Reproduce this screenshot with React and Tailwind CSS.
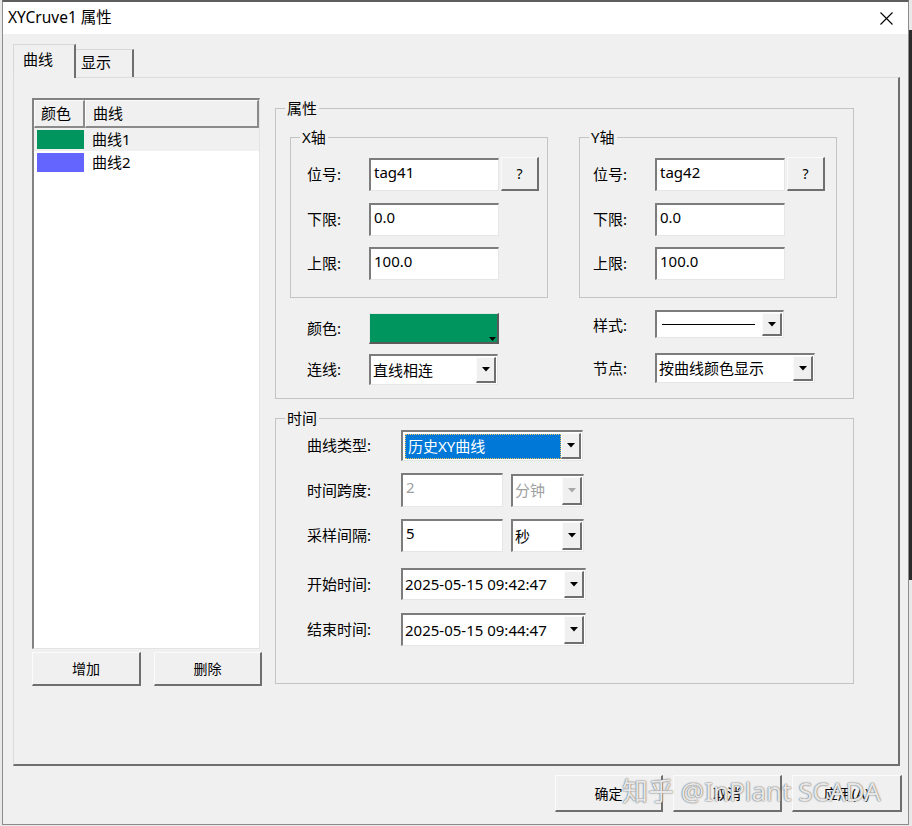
import React from 'react';

// Windows classic 3D edges
const SUNKEN =
  'bg-white border-t-2 border-l-2 border-t-[#7c7c7c] border-l-[#7c7c7c] border-r border-b border-r-[#e6e6e6] border-b-[#e6e6e6]';
const RAISED =
  'bg-[#f0f0f0] border-t border-l border-t-[#fbfbfb] border-l-[#fbfbfb] border-r-2 border-b-2 border-r-[#6f6f6f] border-b-[#6f6f6f]';

function Arrow({ disabled }) {
  return (
    <div className={`w-[20px] h-full flex items-center justify-center ${RAISED}`}>
      <svg width="8" height="5" viewBox="0 0 8 5">
        <path d="M0 0H8L4 4.5Z" fill={disabled ? '#a8a8a8' : '#000'} />
      </svg>
    </div>
  );
}

function Field({ value, w, h, disabled }) {
  return (
    <div
      className={`${SUNKEN} ${disabled ? 'bg-[#f0f0f0] text-[#a0a0a0]' : 'text-black'} pl-[3px] pt-[1px] leading-[22px]`}
      style={{ width: w, height: h }}
    >
      {value}
    </div>
  );
}

function Combo({ children, w, h, disabled }) {
  return (
    <div
      className={`${SUNKEN} ${disabled ? 'bg-[#f0f0f0] text-[#a0a0a0]' : 'text-black'} flex items-stretch`}
      style={{ width: w, height: h }}
    >
      <div className="flex-1 flex items-center pl-[2px] min-w-0">{children}</div>
      <div className="py-[1px] pr-[1px]">
        <Arrow disabled={disabled} />
      </div>
    </div>
  );
}

function QButton() {
  return (
    <div className={`${RAISED} ml-[2px] w-[38px] h-[34px] flex items-center justify-center text-[14px] border-t-[#c8c8c8] border-l-[#c8c8c8]`}>
      ?
    </div>
  );
}

function Group({ title, className, children }) {
  return (
    <div className={`border border-[#c4c4c4] flex flex-col ${className}`}>
      <span className="-mt-[11px] -mb-[9px] ml-[9px] px-[2px] w-fit bg-[#f0f0f0] leading-[20px] text-[15px]">
        {title}
      </span>
      {children}
    </div>
  );
}

function AxisBox({ name, tag, padL }) {
  return (
    <Group title={name} className="w-[258px] h-[161px]">
      <div className="flex flex-col mt-[19px]" style={{ paddingLeft: padL }}>
        <div className="flex items-center">
          <span className="w-[62px]">位号:</span>
          <Field value={tag} w={130} h={33} />
          <QButton />
        </div>
        <div className="flex items-center mt-[12px]">
          <span className="w-[62px]">下限:</span>
          <Field value="0.0" w={130} h={33} />
        </div>
        <div className="flex items-center mt-[11px]">
          <span className="w-[62px]">上限:</span>
          <Field value="100.0" w={130} h={33} />
        </div>
      </div>
    </Group>
  );
}

export default function App() {
  return (
    <div className="w-[912px] h-[826px] bg-[#e9e9e9] flex font-['Noto_Sans','Noto_Sans_CJK_SC',sans-serif] text-[15px] text-black">
      <div className="relative ml-[2px] w-[907px] h-[825px] bg-[#f0f0f0] border border-[#8c8c8c] border-t-2 border-t-[#5e5e5e] flex flex-col">
        {/* title bar */}
        <div className="h-[32px] bg-white flex items-center justify-between pl-[5px] pr-[14px]">
          <span className="text-[15.5px]">XYCruve1 属性</span>
          <svg width="13" height="13" viewBox="0 0 13 13" className="mr-[1px]">
            <path d="M0.5 0.5L12.5 12.5M12.5 0.5L0.5 12.5" stroke="#000" strokeWidth="1.1" />
          </svg>
        </div>

        {/* tabs */}
        <div className="flex items-end h-[43px] pl-[10px]">
          <div className="h-[34px] w-[63px] bg-[#f0f0f0] border-t border-l border-t-[#d8d8d8] border-l-[#d8d8d8] border-r-2 border-r-[#6f6f6f] pl-[9px] pt-[3px] relative top-[1px] z-10">
            曲线
          </div>
          <div className="h-[28px] w-[58px] bg-[#f0f0f0] border-t border-t-[#d8d8d8] border-r-2 border-r-[#6f6f6f] pl-[5px] pt-[1px]">
            显示
          </div>
        </div>

        {/* tab panel */}
        <div className="ml-[10px] w-[887px] h-[689px] border-t border-l border-t-[#dcdcdc] border-l-[#dcdcdc] border-r-2 border-b-2 border-r-[#6f6f6f] border-b-[#6f6f6f] flex">
          {/* left: list */}
          <div className="pl-[18px] pt-[20px] flex flex-col">
            <div className="w-[228px] h-[551px] bg-white border-t-2 border-l-2 border-t-[#828282] border-l-[#828282] border-r border-b border-r-[#e3e3e3] border-b-[#e3e3e3] flex flex-col">
              <div className="flex h-[28px]">
                <div className={`${RAISED} border-r-[#8a8a8a] border-b-[#8a8a8a] w-[51px] pl-[6px] leading-[24px]`}>颜色</div>
                <div className={`${RAISED} border-r-[#8a8a8a] border-b-[#8a8a8a] flex-1 pl-[7px] leading-[24px]`}>曲线</div>
              </div>
              <div className="flex items-center h-[23px] bg-[#f0f0f0]">
                <div className="ml-[3px] w-[47px] h-[19px] bg-[#00955f]" />
                <span className="ml-[8px]">曲线1</span>
              </div>
              <div className="flex items-center h-[22px]">
                <div className="ml-[3px] w-[47px] h-[19px] bg-[#6464ff]" />
                <span className="ml-[8px]">曲线2</span>
              </div>
            </div>
            <div className="flex gap-[13px] mt-[3px]">
              <div className={`${RAISED} w-[109px] h-[34px] flex items-center justify-center text-[14px]`}>增加</div>
              <div className={`${RAISED} w-[108px] h-[34px] flex items-center justify-center text-[14px]`}>删除</div>
            </div>
          </div>

          {/* right: properties */}
          <div className="ml-[13px] pt-[30px] flex flex-col">
            <Group title="属性" className="w-[579px] h-[291px]">
              <div className="flex mt-[28px] pl-[14px] gap-[31px]">
                <AxisBox name="X轴" tag="tag41" padL={16} />
                <AxisBox name="Y轴" tag="tag42" padL={13} />
              </div>
              <div className="flex">
                <div className="w-[303px] pl-[31px] flex flex-col">
                  <div className="flex items-center mt-[15px]">
                    <span className="w-[62px]">颜色:</span>
                    <div className="relative w-[130px] h-[31px] bg-[#00955f] border-t border-l border-t-[#e6e6e6] border-l-[#e6e6e6] border-r-2 border-b-2 border-r-[#5a5a5a] border-b-[#5a5a5a]">
                      <svg width="7" height="4" viewBox="0 0 7 4" className="absolute right-[1px] bottom-[1px]">
                        <path d="M0 0H7L3.5 4Z" fill="#000" />
                      </svg>
                    </div>
                  </div>
                  <div className="flex items-center mt-[10px]">
                    <span className="w-[62px]">连线:</span>
                    <Combo w={129} h={31}>直线相连</Combo>
                  </div>
                </div>
                <div className="pl-[14px] flex flex-col">
                  <div className="flex items-center mt-[12px]">
                    <span className="w-[62px] pt-[3px]">样式:</span>
                    <Combo w={129} h={28}>
                      <div className="w-[93px] ml-[3px] h-[1px] bg-black" />
                    </Combo>
                  </div>
                  <div className="flex items-center mt-[15px]">
                    <span className="w-[62px]">节点:</span>
                    <Combo w={160} h={30}>按曲线颜色显示</Combo>
                  </div>
                </div>
              </div>
            </Group>

            <Group title="时间" className="w-[579px] h-[266px] mt-[19px]">
              <div className="flex flex-col pl-[31px]">
                <div className="flex items-center mt-[11px]">
                  <span className="w-[94px]">曲线类型:</span>
                  <Combo w={182} h={31}>
                    <div className="w-full h-[25px] bg-[#0078d7] text-white border border-dotted border-[#f0c060] pl-[2px] leading-[22px]">
                      历史XY曲线
                    </div>
                  </Combo>
                </div>
                <div className="flex items-center mt-[12px]">
                  <span className="w-[94px]">时间跨度:</span>
                  <Field value="2" w={102} h={34} disabled />
                  <div className="ml-[8px]">
                    <Combo w={73} h={33} disabled>分钟</Combo>
                  </div>
                </div>
                <div className="flex items-center mt-[12px]">
                  <span className="w-[94px]">采样间隔:</span>
                  <Field value="5" w={102} h={33} />
                  <div className="ml-[8px]">
                    <Combo w={73} h={33}>秒</Combo>
                  </div>
                </div>
                <div className="flex items-center mt-[16px]">
                  <span className="w-[94px]">开始时间:</span>
                  <Combo w={185} h={32}>2025-05-15 09:42:47</Combo>
                </div>
                <div className="flex items-center mt-[13px]">
                  <span className="w-[94px]">结束时间:</span>
                  <Combo w={185} h={33}>2025-05-15 09:44:47</Combo>
                </div>
              </div>
            </Group>
          </div>
        </div>

        {/* dialog buttons */}
        <div className="flex gap-[10px] ml-[552px] mt-[9px]">
          <div className={`${RAISED} w-[108px] h-[37px] flex items-center justify-center text-[14px]`}>确定</div>
          <div className={`${RAISED} w-[109px] h-[37px] flex items-center justify-center text-[14px]`}>取消</div>
          <div className={`${RAISED} w-[110px] h-[37px] flex items-center justify-center text-[14px]`}>应用(A)</div>
        </div>

        {/* watermark */}
        <div className="absolute left-[619px] top-[771px] text-[26px] leading-[36px] text-white/85 [text-shadow:0_0_1px_#555,0_0_2px_#888] whitespace-nowrap pointer-events-none">
          知乎 @InPlant SCADA
        </div>
      </div>
      <div className="w-[3px] h-[550px] mt-[30px] bg-[#2b2b2b]" />
    </div>
  );
}
